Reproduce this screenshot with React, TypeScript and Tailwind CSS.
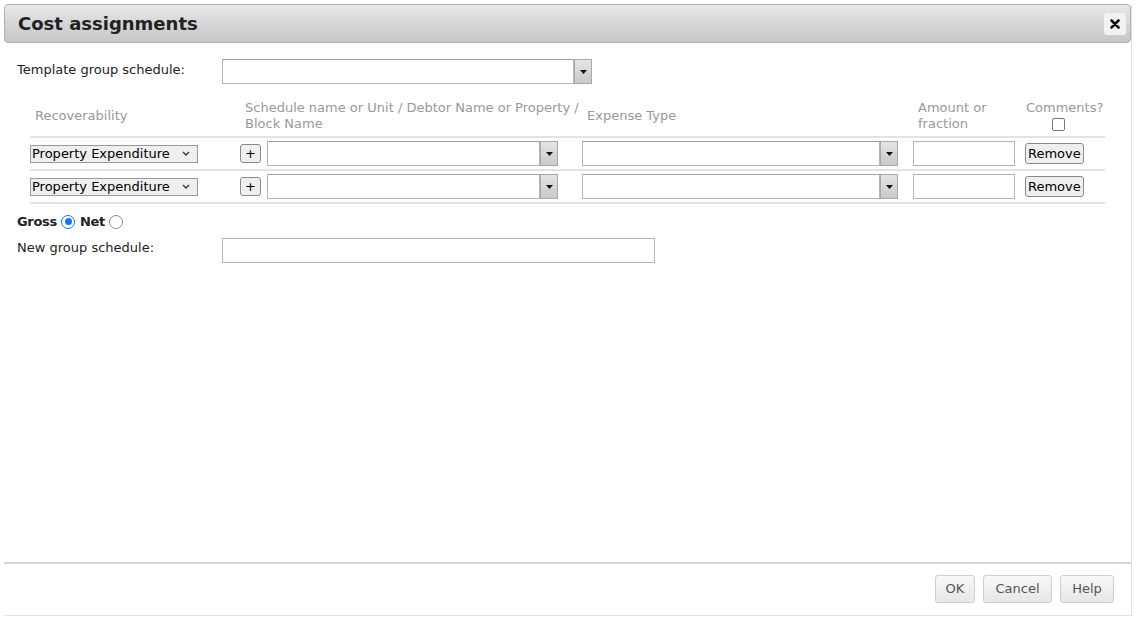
import { useState } from "react";

interface CostRow {
  id: number;
  recoverability: string;
}

function Combo({ width }: { width: string }) {
  return (
    <div className={`flex h-[25px] ${width}`}>
      <div className="flex-1 border border-[#b5b5b5] border-t-[#a0a0a0] bg-white" />
      <div className="flex w-[18px] items-center justify-center border border-[#a8a8a8] bg-gradient-to-b from-[#e4e4e4] to-[#c9c9c9]">
        <svg width="7" height="4" viewBox="0 0 7 4">
          <path d="M0 0h7L3.5 4z" fill="#111" />
        </svg>
      </div>
    </div>
  );
}

function RecoverabilitySelect({ value }: { value: string }) {
  return (
    <div className="flex h-[18px] w-[168px] items-center justify-between border border-[#9a9a9a] bg-[#efefef] pl-[1px] pr-[7px] text-[13px] text-black">
      <span>{value}</span>
      <svg width="8" height="5" viewBox="0 0 8 5">
        <path d="M1 1l3 3 3-3" stroke="#333" strokeWidth="1.3" fill="none" />
      </svg>
    </div>
  );
}

function Radio({ checked, onClick }: { checked: boolean; onClick: () => void }) {
  return (
    <button
      onClick={onClick}
      className={`flex h-[14px] w-[14px] items-center justify-center rounded-full border-[1.5px] bg-white ${
        checked ? "border-[#1a73e8]" : "border-[#8a8a8a]"
      }`}
    >
      {checked && <span className="h-[7px] w-[7px] rounded-full bg-[#1a73e8]" />}
    </button>
  );
}

export default function App() {
  const [rows] = useState<CostRow[]>([
    { id: 1, recoverability: "Property Expenditure" },
    { id: 2, recoverability: "Property Expenditure" },
  ]);
  const [mode, setMode] = useState<"gross" | "net">("gross");

  return (
    <div className="h-[618px] w-[1136px] bg-white p-[4px] pb-[2px] font-['DejaVu_Sans',Verdana,sans-serif] text-[13px] text-[#222]">
      <div className="flex h-full flex-col border-r border-b border-[#e2e2e2]">
        {/* Title bar */}
        <div className="flex h-[39px] items-center justify-between rounded-[4px] border border-[#b0b0b0] bg-gradient-to-b from-[#e8e8e8] to-[#c6c6c6] pl-[13px] pr-[4px]">
          <div className="text-[18px] font-bold text-[#222]">Cost assignments</div>
          <button className="flex h-[22px] w-[22px] items-center justify-center rounded-[3px] bg-[#f2f2f2]">
            <svg width="10" height="10" viewBox="0 0 10 10">
              <path d="M1.5 1.5l7 7M8.5 1.5l-7 7" stroke="#111" strokeWidth="2.6" strokeLinecap="round" />
            </svg>
          </button>
        </div>

        {/* Body */}
        <div className="flex-1 px-[13px] pt-[16px]">
          <div className="flex items-start">
            <label className="w-[205px] pt-[1px]">Template group schedule:</label>
            <Combo width="w-[370px]" />
          </div>

          {/* Cost table */}
          <div className="mx-[13px] mt-[16px]">
            <div className="grid grid-cols-[210px_342px_331px_108px_1fr] border-b-2 border-[#e3e3e3] pb-[4px] leading-[16px] text-[#999]">
              <div className="flex items-center pl-[5px]">Recoverability</div>
              <div className="pl-[5px]">
                Schedule name or Unit / Debtor Name or Property /
                <br />
                Block Name
              </div>
              <div className="flex items-center pl-[5px]">Expense Type</div>
              <div className="pl-[5px]">
                Amount or
                <br />
                fraction
              </div>
              <div className="flex flex-col items-start pl-[5px]">
                <span>Comments?</span>
                <span className="ml-[26px] mt-[2px] block h-[13px] w-[13px] rounded-[2px] border border-[#777] bg-white" />
              </div>
            </div>

            {rows.map((row) => (
              <div
                key={row.id}
                className="grid h-[33px] grid-cols-[210px_342px_331px_108px_1fr] items-center border-b-2 border-[#e3e3e3]"
              >
                <div>
                  <RecoverabilitySelect value={row.recoverability} />
                </div>
                <div className="flex items-center">
                  <button className="mr-[6px] flex h-[19px] w-[21px] items-center justify-center rounded-[3px] border border-[#8a8a8a] bg-[#efefef] text-[13px] leading-none text-black">
                    +
                  </button>
                  <Combo width="w-[291px]" />
                </div>
                <div>
                  <Combo width="w-[316px]" />
                </div>
                <div>
                  <div className="h-[25px] w-[102px] border border-[#b5b5b5] bg-white" />
                </div>
                <div className="pl-[4px]">
                  <button className="h-[21px] rounded-[3px] border border-[#8a8a8a] bg-[#efefef] px-[2px] text-[13px] leading-none text-black">
                    Remove
                  </button>
                </div>
              </div>
            ))}
          </div>

          {/* Gross / Net */}
          <div className="mt-[8px] flex items-center gap-[4px] font-bold">
            <span className="tracking-[-0.3px]">Gross</span>
            <Radio checked={mode === "gross"} onClick={() => setMode("gross")} />
            <span className="ml-[1px] tracking-[-0.3px]">Net</span>
            <Radio checked={mode === "net"} onClick={() => setMode("net")} />
          </div>

          <div className="mt-[6px] flex items-start">
            <label className="w-[205px]">New group schedule:</label>
            <div className="h-[25px] w-[433px] border border-[#b5b5b5] bg-white" />
          </div>
        </div>

        {/* Footer */}
        <div className="flex h-[53px] items-center justify-end gap-[8px] border-t-2 border-[#d4d4d4] pr-[17px] pb-[2px] text-[#555]">
          <button className="h-[28px] w-[40px] rounded-[3px] border border-[#cfcfcf] bg-gradient-to-b from-[#f8f8f8] to-[#e6e6e6]">OK</button>
          <button className="h-[28px] w-[69px] rounded-[3px] border border-[#cfcfcf] bg-gradient-to-b from-[#f8f8f8] to-[#e6e6e6]">Cancel</button>
          <button className="h-[28px] w-[54px] rounded-[3px] border border-[#cfcfcf] bg-gradient-to-b from-[#f8f8f8] to-[#e6e6e6]">Help</button>
        </div>
      </div>
    </div>
  );
}
